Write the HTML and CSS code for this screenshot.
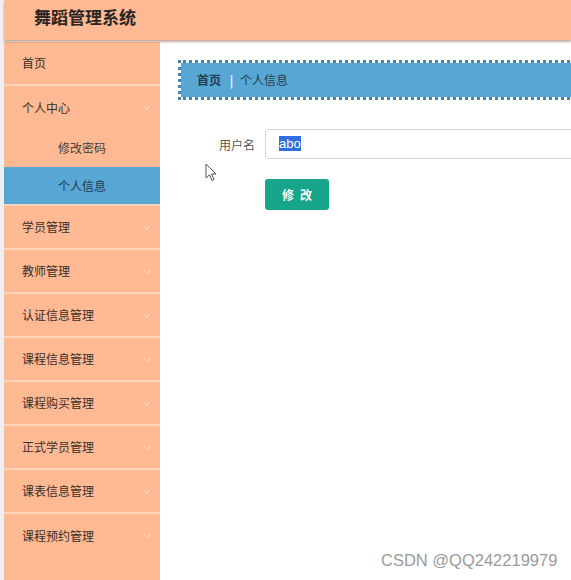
FILE: index.html
```html
<!DOCTYPE html>
<html lang="zh-CN">
<head>
    <meta charset="UTF-8">
    <meta name="viewport" content="width=device-width, initial-scale=1.0">
    <title>舞蹈管理系统</title>
    <link rel="stylesheet" href="styles.css">
</head>
<body>
    <div class="app">
        <header class="topbar">
            <div class="brand">舞蹈管理系统</div>
        </header>

        <div class="layout">
            <aside class="sidebar">
                <div class="menu-item">首页</div>
                <div class="menu-item open">
                    个人中心
                    <svg class="arrow" viewBox="0 0 10 6"><polyline points="1,1 5,5 9,1"/></svg>
                </div>
                <div class="sub-item">修改密码</div>
                <div class="sub-item active">个人信息</div>
                <div class="menu-item">学员管理<svg class="arrow" viewBox="0 0 10 6"><polyline points="1,1 5,5 9,1"/></svg></div>
                <div class="menu-item">教师管理<svg class="arrow" viewBox="0 0 10 6"><polyline points="1,1 5,5 9,1"/></svg></div>
                <div class="menu-item">认证信息管理<svg class="arrow" viewBox="0 0 10 6"><polyline points="1,1 5,5 9,1"/></svg></div>
                <div class="menu-item">课程信息管理<svg class="arrow" viewBox="0 0 10 6"><polyline points="1,1 5,5 9,1"/></svg></div>
                <div class="menu-item">课程购买管理<svg class="arrow" viewBox="0 0 10 6"><polyline points="1,1 5,5 9,1"/></svg></div>
                <div class="menu-item">正式学员管理<svg class="arrow" viewBox="0 0 10 6"><polyline points="1,1 5,5 9,1"/></svg></div>
                <div class="menu-item">课表信息管理<svg class="arrow" viewBox="0 0 10 6"><polyline points="1,1 5,5 9,1"/></svg></div>
                <div class="menu-item last">课程预约管理<svg class="arrow" viewBox="0 0 10 6"><polyline points="1,1 5,5 9,1"/></svg></div>
            </aside>

            <main class="main">
                <div class="crumb">
                    <span class="crumb-home">首页</span>
                    <span class="crumb-sep">|</span>
                    <span class="crumb-cur">个人信息</span>
                </div>

                <form class="form">
                    <div class="form-row">
                        <label class="form-label">用户名</label>
                        <div class="form-input"><span class="selected">abo</span></div>
                    </div>
                    <div class="form-row">
                        <span class="form-label"></span>
                        <button type="button" class="btn">修改</button>
                    </div>
                </form>

                <!-- mouse pointer captured in the screenshot -->
                <svg class="cursor" viewBox="0 0 12 19">
                    <path d="M1 1 L1 15 L4.5 11.8 L7 17.5 L9 16.6 L6.6 11 L11 11 Z"/>
                </svg>
            </main>
        </div>

        <div class="watermark">CSDN @QQ242219979</div>
    </div>
</body>
</html>
```

FILE: styles.css
```css
html, body {
    margin: 0;
    padding: 0;
    height: 100%;
    overflow: hidden;
}
body {
    font-family: "Noto Sans CJK SC", "Liberation Sans", sans-serif;
    background: #eef0f3;
    color: #333;
}
.app {
    position: relative;
    margin-left: 4px;
    height: 100%;
    background: #fff;
}
.topbar {
    height: 40px;
    background: #ffb993;
    box-shadow: 0 2px 2px rgba(120, 70, 40, 0.45);
    position: relative;
    z-index: 2;
}
.brand {
    padding-left: 30px;
    line-height: 34px;
    font-size: 17px;
    font-weight: bold;
    color: #2a2522;
}
.layout {
    display: flex;
    margin-top: 2px;
    height: calc(100% - 42px);
}
.sidebar {
    width: 156px;
    background: #ffb993;
    flex-shrink: 0;
}
.menu-item {
    position: relative;
    height: 42px;
    line-height: 42px;
    padding-left: 18px;
    font-size: 12px;
    color: #3a302b;
    border-bottom: 2px solid #ffd4bd;
}
.menu-item.open,
.menu-item.last {
    border-bottom: none;
    height: 43px;
    line-height: 43px;
}
.arrow {
    position: absolute;
    right: 9px;
    top: 19px;
    width: 8px;
    height: 5px;
    fill: none;
    stroke: #ffe2d2;
    stroke-width: 1.2;
}
.sub-item {
    height: 38px;
    line-height: 38px;
    text-align: center;
    font-size: 12px;
    color: #4a3e38;
}
.sub-item.active {
    background: #57a6d3;
    color: #1f3a4e;
    height: 37px;
    line-height: 37px;
    border-bottom: 2px solid #ffd4bd;
}
.main {
    position: relative;
    flex: 1;
    min-width: 0;
    overflow: hidden;
    padding: 18px 0 0 18px;
}
.crumb {
    height: 34px;
    line-height: 34px;
    padding-left: 16px;
    margin-right: -40px;
    background: #57a6d3;
    background-clip: padding-box;
    border: 3px dotted #3f86b8;
    font-size: 12px;
}
.crumb-home {
    font-weight: bold;
    color: #233b4c;
}
.crumb-sep {
    color: #eef6fb;
    margin: 0 4px 0 6px;
    font-weight: bold;
}
.crumb-cur {
    color: #2b3e4b;
}
.form {
    margin-top: 29px;
}
.form-row {
    display: flex;
    align-items: center;
    margin-bottom: 20px;
}
.form-label {
    width: 77px;
    flex-shrink: 0;
    padding-right: 10px;
    text-align: right;
    font-size: 12px;
    color: #555;
}
.form-input {
    width: 500px;
    flex-shrink: 0;
    height: 28px;
    line-height: 28px;
    border: 1px solid #cfd8d8;
    border-radius: 3px;
    padding-left: 13px;
    font-family: "Liberation Sans", sans-serif;
    font-size: 13px;
}
.selected {
    background: #2f6fe0;
    color: #fff;
}
.btn {
    width: 64px;
    height: 31px;
    border: none;
    border-radius: 3px;
    background: #17a68a;
    color: #fff;
    font-family: "Noto Sans CJK SC", sans-serif;
    font-size: 12px;
    font-weight: bold;
    letter-spacing: 6px;
    padding-left: 12px;
    cursor: pointer;
}
.cursor {
    position: absolute;
    left: 45px;
    top: 121px;
    width: 12px;
    height: 19px;
    fill: #fff;
    stroke: #555;
    stroke-width: 1;
}
.watermark {
    position: absolute;
    left: 377px;
    top: 551px;
    font-family: "Liberation Sans", sans-serif;
    font-size: 16.5px;
    color: #9a9a9a;
}
```
